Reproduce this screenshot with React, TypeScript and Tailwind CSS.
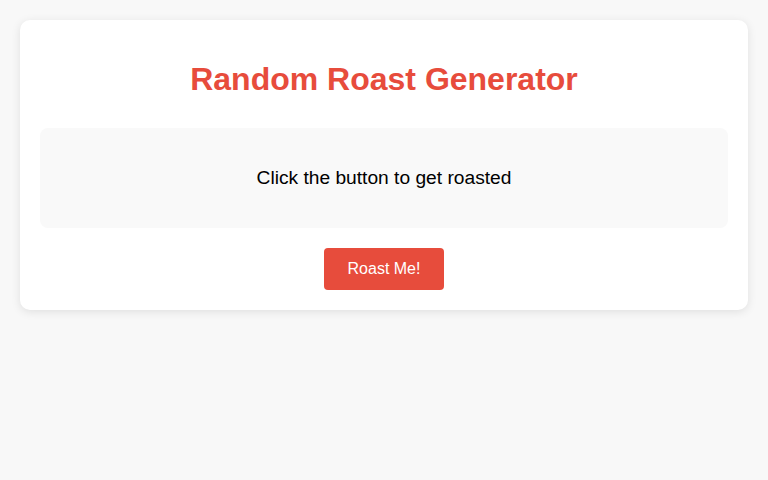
import React from 'react';

export default function App() {
  return (
    <div className="min-h-screen w-full bg-[#f8f8f8] p-5 font-['Liberation_Sans',Arial,sans-serif]">
      <div className="rounded-[10px] bg-white p-5 shadow-[0_2px_10px_rgba(0,0,0,0.1)] text-center">
        <h1 className="pt-[21px] text-[32px] leading-[37px] font-bold text-[#e74c3c]">Random Roast Generator</h1>
        <div className="mt-[30px] flex h-[100px] items-center justify-center rounded-lg bg-[#f9f9f9] text-[19.2px] text-black">
          Click the button to get roasted
        </div>
        <div className="mt-5 flex justify-center">
          <button className="h-[42px] w-[120px] rounded bg-[#e74c3c] text-base text-white">Roast Me!</button>
        </div>
      </div>
    </div>
  );
}
